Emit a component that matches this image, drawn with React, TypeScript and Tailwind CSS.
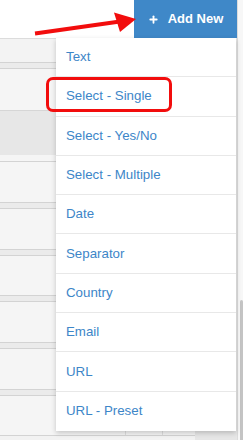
import { Plus } from 'lucide-react';

const fieldTypes = [
  'Text',
  'Select - Single',
  'Select - Yes/No',
  'Select - Multiple',
  'Date',
  'Separator',
  'Country',
  'Email',
  'URL',
  'URL - Preset',
];

function Gap() {
  return <div className="h-[7px] border-y border-[#d3d3d3] bg-[#ebebeb]" />;
}

export default function App() {
  return (
    <div
      className="relative flex h-[440px] w-[243px] overflow-hidden bg-white"
      style={{ fontFamily: '"Liberation Sans", Arial, sans-serif' }}
    >
      <div className="flex flex-1 flex-col">
        <div className="flex h-[38px] justify-end">
          <button className="flex w-[103px] items-center justify-center gap-[9px] bg-[#3f88c8] text-[13px] font-bold text-white">
            <Plus className="h-[11px] w-[11px]" strokeWidth={4} />
            Add New
          </button>
        </div>

        <div className="flex flex-1">
          <div className="flex w-[195px] flex-col border-t border-[#dcdcdc] bg-[#f5f5f5]">
            <div className="h-[23px] bg-[#f3f3f3]" />
            <Gap />
            <div className="h-[41px]" />
            <div className="h-[45px] border-t border-[#d6d6d6] bg-[#e7e7e7]" />
            <div className="h-[7px] border-b border-[#d3d3d3]" />
            <div className="h-[40px]" />
            <Gap />
            <div className="h-[40px]" />
            <Gap />
            <div className="h-[39px]" />
            <Gap />
            <div className="h-[40px]" />
            <Gap />
            <div className="h-[40px]" />
            <Gap />
            <div className="flex h-[40px] border-b border-[#d3d3d3]">
              <div className="w-[125px]" />
              <div className="w-[37px] border-l border-[#dedede]" />
              <div className="flex-1 border-l border-[#dedede]" />
            </div>
            <div className="flex-1 bg-[#f2f2f2]" />
          </div>
          <div className="flex-1 bg-[#e6e6e6]" />
        </div>
      </div>

      <div className="flex w-[6px] flex-col border-l border-[#dcdcdc] bg-[#f7f7f7] pt-[300px]">
        <div className="ml-[2px] flex-1 rounded-t-full bg-[#c4c4c4]" />
      </div>

      {/* dropdown menu */}
      <ul className="absolute left-[56px] top-[38px] w-[180px] bg-white shadow-[0_2px_5px_rgba(0,0,0,0.2)]">
        {fieldTypes.map((label, i) => (
          <li
            key={label}
            className={`flex h-[39.3px] items-center pl-[10px] text-[13.3px] text-[#3d86c8] ${
              i < fieldTypes.length - 1 ? 'border-b border-[#e8e8e8]' : ''
            }`}
          >
            {label}
          </li>
        ))}
      </ul>

      {/* annotations */}
      <div className="absolute left-[46px] top-[77px] h-[35px] w-[126px] rounded-[7px] border-[3px] border-[#f20d0d]" />
      <svg className="absolute left-0 top-0" width="243" height="50" viewBox="0 0 243 50">
        <line x1="35" y1="33.5" x2="120" y2="21.5" stroke="#f20d0d" strokeWidth="4" />
        <polygon points="114,12.5 120,32 136,19" fill="#f20d0d" />
      </svg>
    </div>
  );
}
